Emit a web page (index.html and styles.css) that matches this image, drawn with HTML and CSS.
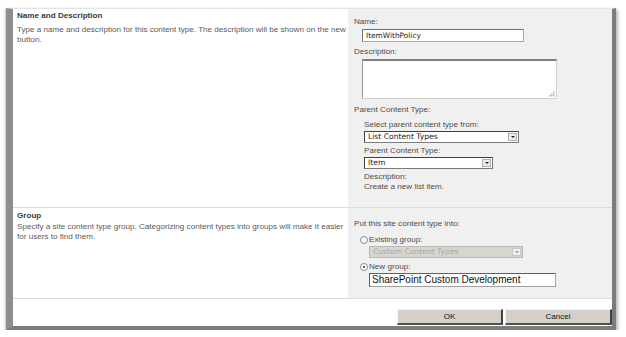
FILE: index.html
```html
<!DOCTYPE html>
<html>
<head>
<meta charset="utf-8">
<link rel="stylesheet" href="styles.css">
</head>
<body>
<div class="frame">
  <div class="section s1">
    <div class="left">
      <div class="title">Name and Description</div>
      <div class="desc">Type a name and description for this content type. The description will be shown on the new button.</div>
    </div>
    <div class="right">
      <div class="lbl l-name">Name:</div>
      <div class="input in-name">ItemWithPolicy</div>
      <div class="lbl l-desc">Description:</div>
      <div class="textarea"><svg class="grip" width="6" height="6" viewBox="0 0 6 6"><rect x="4" y="0" width="1.5" height="1.5" fill="#b8b8b8"/><rect x="2" y="2" width="1.5" height="1.5" fill="#b8b8b8"/><rect x="4" y="2" width="1.5" height="1.5" fill="#b8b8b8"/><rect x="0" y="4" width="1.5" height="1.5" fill="#b8b8b8"/><rect x="2" y="4" width="1.5" height="1.5" fill="#b8b8b8"/><rect x="4" y="4" width="1.5" height="1.5" fill="#b8b8b8"/></svg></div>
      <div class="lbl l-parent">Parent Content Type:</div>
      <div class="nested">
        <div class="lbl l-from">Select parent content type from:</div>
        <div class="select sel-from"><span class="val">List Content Types</span><span class="arrow"></span></div>
        <div class="lbl l-pct">Parent Content Type:</div>
        <div class="select sel-pct"><span class="val">Item</span><span class="arrow"></span></div>
        <div class="lbl l-d2">Description:</div>
        <div class="lbl">Create a new list item.</div>
      </div>
    </div>
  </div>
  <div class="section s2">
    <div class="left">
      <div class="title">Group</div>
      <div class="desc">Specify a site content type group. Categorizing content types into groups will make it easier for users to find them.</div>
    </div>
    <div class="right">
      <div class="lbl l-put">Put this site content type into:</div>
      <div class="radio-row r-exist"><span class="radio"></span><span class="lbl">Existing group:</span></div>
      <div class="select disabled sel-group"><span class="val">Custom Content Types</span><span class="arrow"></span></div>
      <div class="radio-row r-new"><span class="radio checked"></span><span class="lbl">New group:</span></div>
      <div class="input in-group">SharePoint Custom Development</div>
    </div>
  </div>
  <div class="footer">
    <div class="btn btn-ok">OK</div>
    <div class="btn btn-cancel">Cancel</div>
  </div>
</div>
</body>
</html>
```
FILE: styles.css
```css
html, body {
  margin: 0;
  padding: 0;
  background: #fff;
}
body {
  font-family: "Liberation Sans", Arial, sans-serif;
  font-size: 8.1px;
  line-height: 10px;
  color: #4c4c4c;
  padding: 9px 0 0 6px;
}
.frame {
  width: 599px;
  height: 317px;
  background: #fff;
  border-left: 7px solid #8e8e8e;
  border-right: 4px solid #7c7c7c;
  border-bottom: 4px solid #7c7c7c;
  border-top: 1px solid #e4e4e4;
  margin-top: -1px;
  box-shadow: 2px 2px 3px #b8b8b8, -1px 1px 2px #c4c4c4;
  display: flex;
  flex-direction: column;
}
.section {
  display: grid;
  grid-template-columns: 335px 264px;
  border-bottom: 1px solid #dcdcdc;
}
.s1 { height: 198px; }
.s2 { height: 90px; }
.left {
  padding: 2px 1px 0 4px;
}
.s2 .left { padding-top: 3px; }
.title {
  font-weight: bold;
  color: #3a3a3a;
  font-size: 8.1px;
}
.desc {
  color: #5a5a5a;
  margin-top: 4px;
}
.s2 .desc { margin-top: 1px; padding-right: 3px; }
.right {
  background: #f0f0f0;
  padding-left: 6px;
  display: flex;
  flex-direction: column;
  align-items: flex-start;
}
.lbl { color: #4c4c4c; }
.input {
  box-sizing: border-box;
  background: #fff;
  border: 1px solid #a9a9a9;
  border-top-color: #707070;
  border-left-color: #707070;
  margin-left: 8px;
  padding-left: 3px;
  font-family: "DejaVu Sans", Verdana, sans-serif;
  color: #222;
}
.l-name { margin-top: 8px; }
.in-name {
  margin-top: 2px;
  width: 162px;
  height: 13px;
  font-size: 7.4px;
  line-height: 11px;
}
.l-desc { margin-top: 5px; }
.textarea {
  position: relative;
  box-sizing: border-box;
  margin-top: 2px;
  margin-left: 8px;
  width: 195px;
  height: 40px;
  background: #fff;
  border: 1px solid #d0d0d0;
  border-top: 2px solid #808080;
  border-left: 1px solid #9a9a9a;
}
.grip {
  position: absolute;
  right: 1px;
  bottom: 1px;
}
.l-parent { margin-top: 6px; }
.nested {
  margin-left: 10px;
  display: flex;
  flex-direction: column;
  align-items: flex-start;
}
.l-from { margin-top: 5px; }
.select {
  box-sizing: border-box;
  display: flex;
  align-items: center;
  justify-content: space-between;
  background: #fff;
  border: 1px solid #7a7a7a;
  border-top-color: #404040;
  border-left-color: #404040;
  height: 12px;
  padding: 0 1px 0 3px;
  font-family: "DejaVu Sans", Verdana, sans-serif;
  font-size: 7.6px;
  color: #1a1a1a;
}
.select .arrow {
  width: 9px;
  height: 8px;
  box-sizing: border-box;
  background: #ececec;
  border: 1px solid #b0b0b0;
  position: relative;
}
.select .arrow::after {
  content: "";
  position: absolute;
  left: 2px;
  top: 2px;
  border-left: 2px solid transparent;
  border-right: 2px solid transparent;
  border-top: 2px solid #222;
}
.sel-from { margin-top: 1px; width: 155px; }
.l-pct { margin-top: 3px; }
.sel-pct { margin-top: 1px; width: 129px; }
.l-d2 { margin-top: 3px; }
.l-put { margin-top: 11px; }
.radio-row {
  display: flex;
  align-items: center;
  margin-left: 6px;
}
.radio {
  box-sizing: border-box;
  width: 8px;
  height: 8px;
  border-radius: 50%;
  border: 1px solid #8a8a8a;
  background: #fff;
  margin-right: 1px;
  position: relative;
}
.radio.checked::after {
  content: "";
  position: absolute;
  left: 2px;
  top: 2px;
  width: 2px;
  height: 2px;
  border-radius: 50%;
  background: #222;
}
.r-exist { margin-top: 6px; }
.sel-group {
  margin-top: 1px;
  margin-left: 15px;
  width: 154px;
  background: #d8d5cf;
  border-color: #b8b8b8;
  color: #a8a8a8;
}
.sel-group .arrow { background: #f0f0f0; border-color: #c8c8c8; }
.sel-group .arrow::after { border-top-color: #999; }
.r-new { margin-top: 4px; }
.in-group {
  margin-top: 1px;
  margin-left: 15px;
  width: 187px;
  height: 14px;
  font-family: "Liberation Sans", Arial, sans-serif;
  font-size: 10px;
  line-height: 12px;
  padding-left: 2px;
  color: #111;
  border-color: #a0a0a0;
  border-top-color: #606060;
  border-left-color: #606060;
}
.footer {
  flex: 1;
  display: flex;
  justify-content: flex-end;
  align-items: flex-end;
  gap: 2px;
  padding-bottom: 1px;
}
.btn {
  box-sizing: border-box;
  height: 16px;
  background: #d4d0c8;
  border: 1px solid #f4f4f4;
  border-right: 2px solid #404040;
  border-bottom: 2px solid #505050;
  text-align: center;
  line-height: 13px;
  font-size: 8px;
  color: #111;
}
.btn-ok { width: 106px; }
.btn-cancel { width: 107px; }
```
